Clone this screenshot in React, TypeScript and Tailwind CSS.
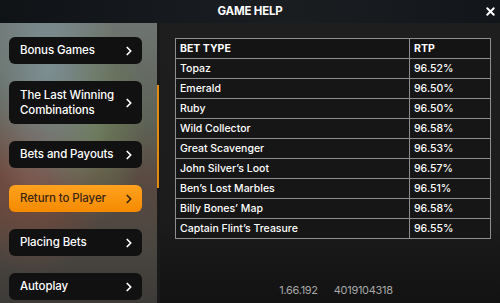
import { ChevronRight, X } from 'lucide-react'

const menu = [
  { label: 'Bonus Games' },
  { label: 'The Last Winning Combinations', tall: true },
  { label: 'Bets and Payouts' },
  { label: 'Return to Player', active: true },
  { label: 'Placing Bets' },
  { label: 'Autoplay' },
]

const rows: [string, string][] = [
  ['Topaz', '96.52%'],
  ['Emerald', '96.50%'],
  ['Ruby', '96.50%'],
  ['Wild Collector', '96.58%'],
  ['Great Scavenger', '96.53%'],
  ["John Silver’s Loot", '96.57%'],
  ['Ben’s Lost Marbles', '96.51%'],
  ['Billy Bones’ Map', '96.58%'],
  ['Captain Flint’s Treasure', '96.55%'],
]

export default function App() {
  return (
    <div
      className="w-[500px] h-[303px] flex flex-col overflow-hidden bg-[#121518] text-white"
      style={{ fontFamily: '"Inter", "Noto Sans", sans-serif' }}
    >
      {/* Header */}
      <div className="h-[23px] flex items-center justify-center relative bg-[linear-gradient(90deg,#101316,#171b1f_40%,#1a1d20_60%,#12161a)]">
        <span className="text-[11.5px] font-bold tracking-[-0.2px]">GAME HELP</span>
        <X className="absolute right-[3px] top-[5px] w-[13px] h-[13px]" strokeWidth={3.5} />
      </div>

      <div className="flex flex-1 min-h-0">
        {/* Left menu */}
        <div className="w-[157px] relative bg-[radial-gradient(ellipse_at_30%_15%,#7d8f93_0%,transparent_45%),radial-gradient(ellipse_at_60%_35%,#6c7a55_0%,transparent_40%),radial-gradient(ellipse_at_20%_55%,#7a4a3c_0%,transparent_45%),linear-gradient(180deg,#6e7470_0%,#5d6357_35%,#5a4a42_55%,#4a4640_80%,#3d3b38_100%)]">
          <div className="flex flex-col gap-[17px] pl-[9px] pt-[14px]">
            {menu.map((m) => (
              <div
                key={m.label}
                className={`w-[133px] rounded-[6px] flex items-center justify-between pl-[11px] pr-[6px] ${
                  m.tall ? 'h-[43px]' : 'h-[27px]'
                } ${
                  m.active
                    ? 'bg-[linear-gradient(180deg,#ffa21f,#f58a00)] text-[#3a2410]'
                    : 'bg-[#111111] text-white'
                }`}
              >
                <span className="text-[11.5px] font-medium leading-[15px] tracking-[-0.1px]">
                  {m.label === 'The Last Winning Combinations' ? (
                    <>
                      The Last Winning
                      <br />
                      Combinations
                    </>
                  ) : (
                    m.label
                  )}
                </span>
                <ChevronRight className="w-[14px] h-[14px] shrink-0" strokeWidth={3} />
              </div>
            ))}
          </div>
        </div>

        {/* Scrollbar */}
        <div className="w-[3px] bg-[#1a1a1a] flex flex-col">
          <div className="h-[62px]" />
          <div className="h-[103px] w-[2px] bg-[#e48a0c]" />
        </div>

        {/* Content */}
        <div className="flex-1 flex flex-col bg-[linear-gradient(180deg,#1e1e1e_0%,#1c1c1c_70%,#121212_100%)] pl-[15px] pr-[9px] pt-[15px]">
          <table className="w-[316px] border-collapse text-[10.5px]">
            <thead>
              <tr className="h-[20px]">
                <th className="border-[1.5px] border-[#8f8f8f] bg-[#141414] text-left font-bold pl-[4px] w-[234px]">BET TYPE</th>
                <th className="border-[1.5px] border-[#8f8f8f] bg-[#141414] text-left font-bold pl-[4px]">RTP</th>
              </tr>
            </thead>
            <tbody>
              {rows.map(([name, rtp]) => (
                <tr key={name} className="h-[20px]">
                  <td className="border-[1.5px] border-[#8f8f8f] bg-[#161616] pl-[4px] font-medium">{name}</td>
                  <td className="border-[1.5px] border-[#8f8f8f] bg-[#161616] pl-[4px] font-medium">{rtp}</td>
                </tr>
              ))}
            </tbody>
          </table>
          <div className="mt-auto mb-[5px] flex justify-center gap-[16px] pl-[6px] text-[11px] text-[#a8a8a8] tracking-[-0.3px]">
            <span>1.66.192</span>
            <span>4019104318</span>
          </div>
        </div>
      </div>
    </div>
  )
}
